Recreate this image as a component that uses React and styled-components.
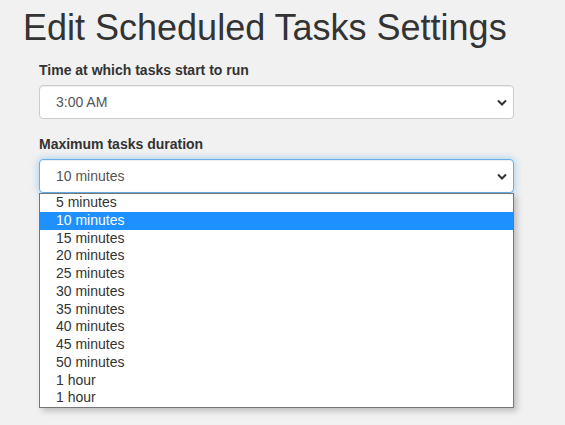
import React from "react";
import styled, { createGlobalStyle } from "styled-components";

const Global = createGlobalStyle`
  html, body { margin: 0; padding: 0; background: #f1f1f1; }
  body { font-family: "Liberation Sans", Arial, Helvetica, sans-serif; color: #333; }
  #root { min-height: 100vh; }
  * { box-sizing: border-box; }
`;

const Page = styled.div`
  min-height: 425px;
  padding: 8px 0 0 23px;
  background: #f1f1f1;
`;

const Title = styled.h1`
  margin: 0 0 12px;
  font-size: 36px;
  line-height: 40px;
  font-weight: 400;
  color: #333;
`;

const Form = styled.div`
  margin-left: 16px;
  width: 475px;
`;

const Group = styled.div`
  margin-bottom: 15px;
`;

const Label = styled.div`
  font-size: 14px;
  line-height: 20px;
  font-weight: 700;
  color: #333;
  margin-bottom: 5px;
`;

const SelectWrap = styled.div`
  position: relative;
`;

const Select = styled.div`
  display: flex;
  align-items: center;
  justify-content: space-between;
  height: 34px;
  padding: 0 6px 0 16px;
  font-size: 14px;
  color: #555;
  background: #fff;
  border: 1px solid ${(p) => (p.$focused ? "#66afe9" : "#ccc")};
  border-radius: 4px;
  box-shadow: ${(p) =>
    p.$focused
      ? "inset 0 1px 1px rgba(0,0,0,.075), 0 0 8px rgba(102,175,233,.6)"
      : "inset 0 1px 1px rgba(0,0,0,.075)"};
`;

const Chevron = styled.svg`
  width: 10px;
  height: 7px;
  flex: none;
`;

const ListBox = styled.div`
  position: absolute;
  top: 34px;
  left: 0;
  width: 475px;
  display: flex;
  flex-direction: column;
  background: #fff;
  border: 1px solid #767676;
  box-shadow: 3px 3px 6px rgba(0, 0, 0, 0.22);
  z-index: 10;
`;

const Option = styled.div`
  height: 17.75px;
  line-height: 17.75px;
  padding-left: 16px;
  font-size: 14px;
  color: ${(p) => (p.$selected ? "#fff" : "#333")};
  background: ${(p) => (p.$selected ? "#1e90ff" : "#fff")};
  white-space: nowrap;
`;

const ChevronIcon = () => (
  <Chevron viewBox="0 0 10 7">
    <path d="M1 1.5 L5 5.5 L9 1.5" fill="none" stroke="#333" strokeWidth="2" />
  </Chevron>
);

const options = [
  "5 minutes",
  "10 minutes",
  "15 minutes",
  "20 minutes",
  "25 minutes",
  "30 minutes",
  "35 minutes",
  "40 minutes",
  "45 minutes",
  "50 minutes",
  "1 hour",
  "1 hour",
];

export default function App() {
  return (
    <>
      <Global />
      <Page>
        <Title>Edit Scheduled Tasks Settings</Title>
        <Form>
          <Group>
            <Label>Time at which tasks start to run</Label>
            <SelectWrap>
              <Select>
                <span>3:00 AM</span>
                <ChevronIcon />
              </Select>
            </SelectWrap>
          </Group>
          <Group>
            <Label>Maximum tasks duration</Label>
            <SelectWrap>
              <Select $focused>
                <span>10 minutes</span>
                <ChevronIcon />
              </Select>
              <ListBox>
                {options.map((o, i) => (
                  <Option key={i} $selected={i === 1}>
                    {o}
                  </Option>
                ))}
              </ListBox>
            </SelectWrap>
          </Group>
        </Form>
      </Page>
    </>
  );
}
